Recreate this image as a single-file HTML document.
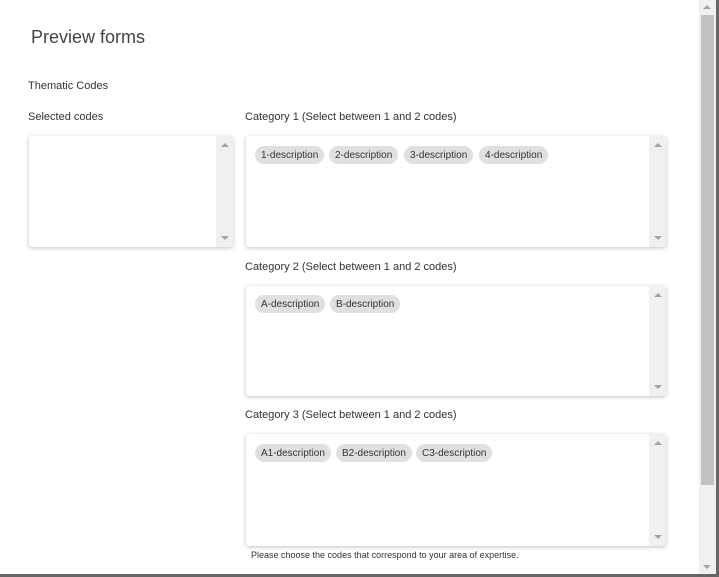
<!DOCTYPE html>
<html><head><style>
body{margin:0;width:719px;height:577px;background:#666;overflow:hidden;font-family:"Liberation Sans",sans-serif;position:relative}
.page{position:absolute;left:0;top:0;width:716px;height:574px;background:#fff}
.sb{position:absolute;left:699px;top:0;width:17px;height:574px;background:#f0f0f0}
.thumb{position:absolute;left:701px;top:15px;width:13px;height:470px;background:#c1c1c1}
.t{position:absolute;color:#333;font-size:11px}
.box{position:absolute;background:#fff;border-radius:3px;box-shadow:0 1px 4px rgba(0,0,0,.25)}
.box .bar{position:absolute;right:0;top:0;bottom:0;width:17px;background:#f0f0f0;border-radius:0 3px 3px 0}
.up,.dn{position:absolute;left:5px;width:0;height:0;border-left:4px solid transparent;border-right:4px solid transparent}
.up{top:7px;border-bottom:4px solid #a3a3a3}.dn{bottom:7px;border-top:4px solid #a3a3a3}
.chip{position:absolute;top:10px;height:18px;line-height:19px;padding:0 6px;background:#e0e0e0;border-radius:9px;font-size:10px;color:#333;white-space:nowrap}
</style></head><body>
<div class="page">
<div class="t" style="left:31px;top:27px;font-size:18px;color:#444">Preview forms</div>
<div class="t" style="left:28px;top:80px">Thematic Codes</div>
<div class="t" style="left:28px;top:111px">Selected codes</div>
<div class="t" style="left:245px;top:111px">Category 1 (Select between 1 and 2 codes)</div>
<div class="box" style="left:29px;top:136px;width:204px;height:111px"><div class="bar"><div class="up"></div><div class="dn"></div></div></div>
<div class="box" style="left:246px;top:136px;width:420px;height:111px"><div class="bar"><div class="up"></div><div class="dn"></div></div>
<div class="chip" style="left:9px">1-description</div><div class="chip" style="left:83px">2-description</div><div class="chip" style="left:158px">3-description</div><div class="chip" style="left:233px">4-description</div></div>
<div class="t" style="left:245px;top:261px">Category 2 (Select between 1 and 2 codes)</div>
<div class="box" style="left:246px;top:286px;width:420px;height:110px"><div class="bar"><div class="up"></div><div class="dn"></div></div>
<div class="chip" style="left:9px;top:9px">A-description</div><div class="chip" style="left:84px;top:9px">B-description</div></div>
<div class="t" style="left:245px;top:409px">Category 3 (Select between 1 and 2 codes)</div>
<div class="box" style="left:246px;top:434px;width:420px;height:112px"><div class="bar"><div class="up"></div><div class="dn"></div></div>
<div class="chip" style="left:9px;top:10px">A1-description</div><div class="chip" style="left:90px;top:10px">B2-description</div><div class="chip" style="left:170px;top:10px">C3-description</div></div>
<div class="t" style="left:251px;top:550px;font-size:9px">Please choose the codes that correspond to your area of expertise.</div>
<div class="sb"><div class="up" style="left:4px;top:5px"></div><div class="dn" style="left:4px;bottom:5px"></div></div>
<div class="thumb"></div>
</div>
</body></html>
